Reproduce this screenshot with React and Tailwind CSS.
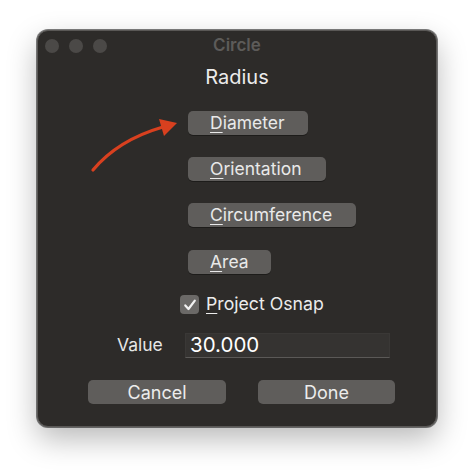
import React from 'react';

const font = { fontFamily: 'Inter, "Liberation Sans", sans-serif' };

const MacButton = ({ label, width }) => (
  <div
    className={`h-[24px] ${width} rounded-[5px] bg-[#5f5d5b] flex items-center pl-[22px] text-[17.5px] text-[#e9e9e9] shadow-[0_1px_0_rgba(0,0,0,0.35)]`}
  >
    <span>
      <span className="underline decoration-1 underline-offset-[3px]">{label[0]}</span>
      {label.slice(1)}
    </span>
  </div>
);

const App = () => {
  return (
    <div className="w-[474px] h-[470px] bg-white relative" style={font}>
      <div className="absolute left-[37px] top-[30px] w-[400px] h-[397px] rounded-[11px] bg-[#2d2b29] border border-[#5a5856] shadow-[0_0_0_1px_rgba(0,0,0,0.5),0_12px_30px_rgba(0,0,0,0.28)] flex flex-col">
        {/* title bar */}
        <div className="h-[30px] grid grid-cols-[1fr_auto_1fr] items-center">
          <div className="flex items-center gap-[10px] pl-[7px]">
            <span className="w-[14px] h-[14px] rounded-full bg-[#4b4947]" />
            <span className="w-[14px] h-[14px] rounded-full bg-[#4b4947]" />
            <span className="w-[14px] h-[14px] rounded-full bg-[#4b4947]" />
          </div>
          <div className="text-[17px] font-semibold text-[#5d5b59]">Circle</div>
          <div />
        </div>

        <div className="mt-[4px] h-[24px] flex items-center justify-center text-[20px] text-[#ececec]">
          Radius
        </div>

        <div className="mt-[22px] pl-[150px] flex flex-col gap-[22px]">
          <MacButton label="Diameter" width="w-[120px]" />
          <MacButton label="Orientation" width="w-[138px]" />
          <MacButton label="Circumference" width="w-[168px]" />
          <div className="mt-[1px]">
            <MacButton label="Area" width="w-[83px]" />
          </div>
        </div>

        <div className="mt-[21px] h-[19px] pl-[142px] flex items-center gap-[7px]">
          <span className="w-[19px] h-[19px] rounded-[4px] bg-[#6b6967] flex items-center justify-center">
            <svg width="14" height="14" viewBox="0 0 14 14" fill="none">
              <path d="M2.3 7.4 L5.5 11 L11.8 2.6" stroke="#f2f2f2" strokeWidth="2.2" strokeLinecap="round" strokeLinejoin="round" />
            </svg>
          </span>
          <span className="text-[17.7px] text-[#ececec]">
            <span className="underline decoration-1 underline-offset-[3px]">P</span>roject Osnap
          </span>
        </div>

        <div className="mt-[19px] h-[25px] pl-[79px] flex items-center">
          <span className="w-[47px] text-[17.5px] text-[#e6e6e6]">Value</span>
          <div className="ml-[21px] w-[205px] h-[25px] bg-[#353331] border border-[#3a3836] border-b-[#5b5957] flex items-center pl-[4px] text-[20.5px] text-white">
            30.000
          </div>
        </div>

        <div className="mt-[22px] pl-[50px] flex gap-[32px]">
          <div className="w-[138px] h-[24px] rounded-[5px] bg-[#5f5d5b] flex items-center justify-center text-[18px] text-[#ececec]">
            Cancel
          </div>
          <div className="w-[137px] h-[24px] rounded-[5px] bg-[#5f5d5b] flex items-center justify-center text-[18px] text-[#ececec]">
            Done
          </div>
        </div>
      </div>

      {/* red annotation arrow */}
      <svg className="absolute left-0 top-0" width="474" height="470" viewBox="0 0 474 470">
        <path d="M93 170 Q 118 140 163 127" stroke="#d8401f" strokeWidth="3.2" fill="none" strokeLinecap="round" />
        <path d="M177 123 L159 119 L164 136 Z" fill="#d8401f" />
      </svg>
    </div>
  );
};

export default App;
